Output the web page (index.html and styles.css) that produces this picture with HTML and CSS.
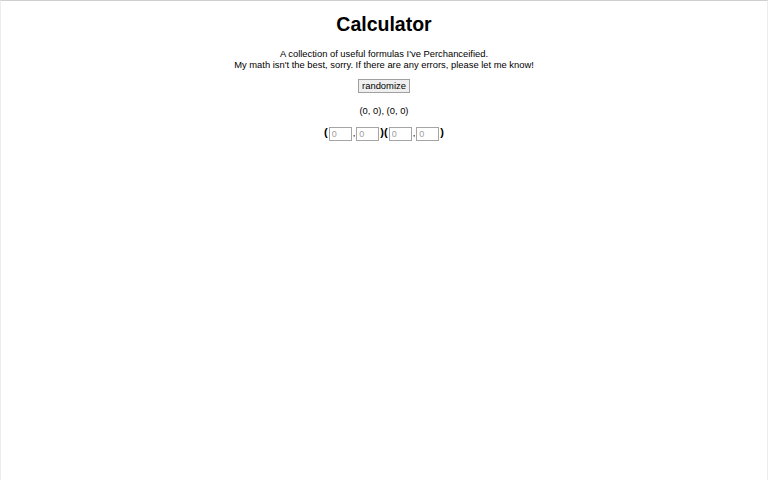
FILE: index.html
```html
<!DOCTYPE html>
<html>
<head>
<meta charset="utf-8">
<link rel="stylesheet" href="styles.css">
</head>
<body>
<div class="frame">
  <h1 class="title">Calculator</h1>
  <p class="intro">A collection of useful formulas I've Perchanceified.<br>My math isn't the best, sorry. If there are any errors, please let me know!</p>
  <div class="row"><button class="btn">randomize</button></div>
  <p class="points">(0, 0), (0, 0)</p>
  <div class="inputs"><span class="par">(</span><input class="num" placeholder="0">,<input class="num" placeholder="0"><span class="par">)</span><span class="par">(</span><input class="num" placeholder="0">,<input class="num" placeholder="0"><span class="par">)</span></div>
</div>
</body>
</html>
```
FILE: styles.css
```css
html, body { margin: 0; padding: 0; background: #fff; }
body { font-family: "Liberation Sans", Arial, sans-serif; color: #000; }
.frame {
  box-sizing: border-box;
  width: 768px;
  height: 480px;
  border-top: 1px solid #cfcfcf;
  border-left: 1px solid #ececec;
  border-right: 1px solid #ececec;
  text-align: center;
  padding-top: 12px;
}
.title { font-size: 19.5px; font-weight: bold; margin: 0 0 12px; line-height: 23px; }
.intro { font-size: 9.4px; line-height: 11px; margin: 0 0 9px; }
.row { margin: 0 0 12px; line-height: 0; }
.btn {
  box-sizing: border-box;
  font-family: "Liberation Sans", Arial, sans-serif;
  font-size: 9.4px;
  padding: 0 3px;
  background: #efefef;
  border: 1px solid #a0a0a0;
  border-radius: 0;
  color: #000;
  height: 14px;
  line-height: 12px;
}
.points { font-size: 9.4px; line-height: 12px; margin: 0 0 8px; }
.inputs { font-size: 9.4px; line-height: 15px; }
.par { font-size: 11px; font-weight: bold; }
.num {
  box-sizing: border-box;
  width: 23px;
  height: 14px;
  font-family: "Liberation Sans", Arial, sans-serif;
  font-size: 9px;
  padding: 0 2px;
  border: 1px solid #a5a5a5;
  margin: 0 1px;
  vertical-align: middle;
}
.num::placeholder { color: #a0a0a0; }
```
